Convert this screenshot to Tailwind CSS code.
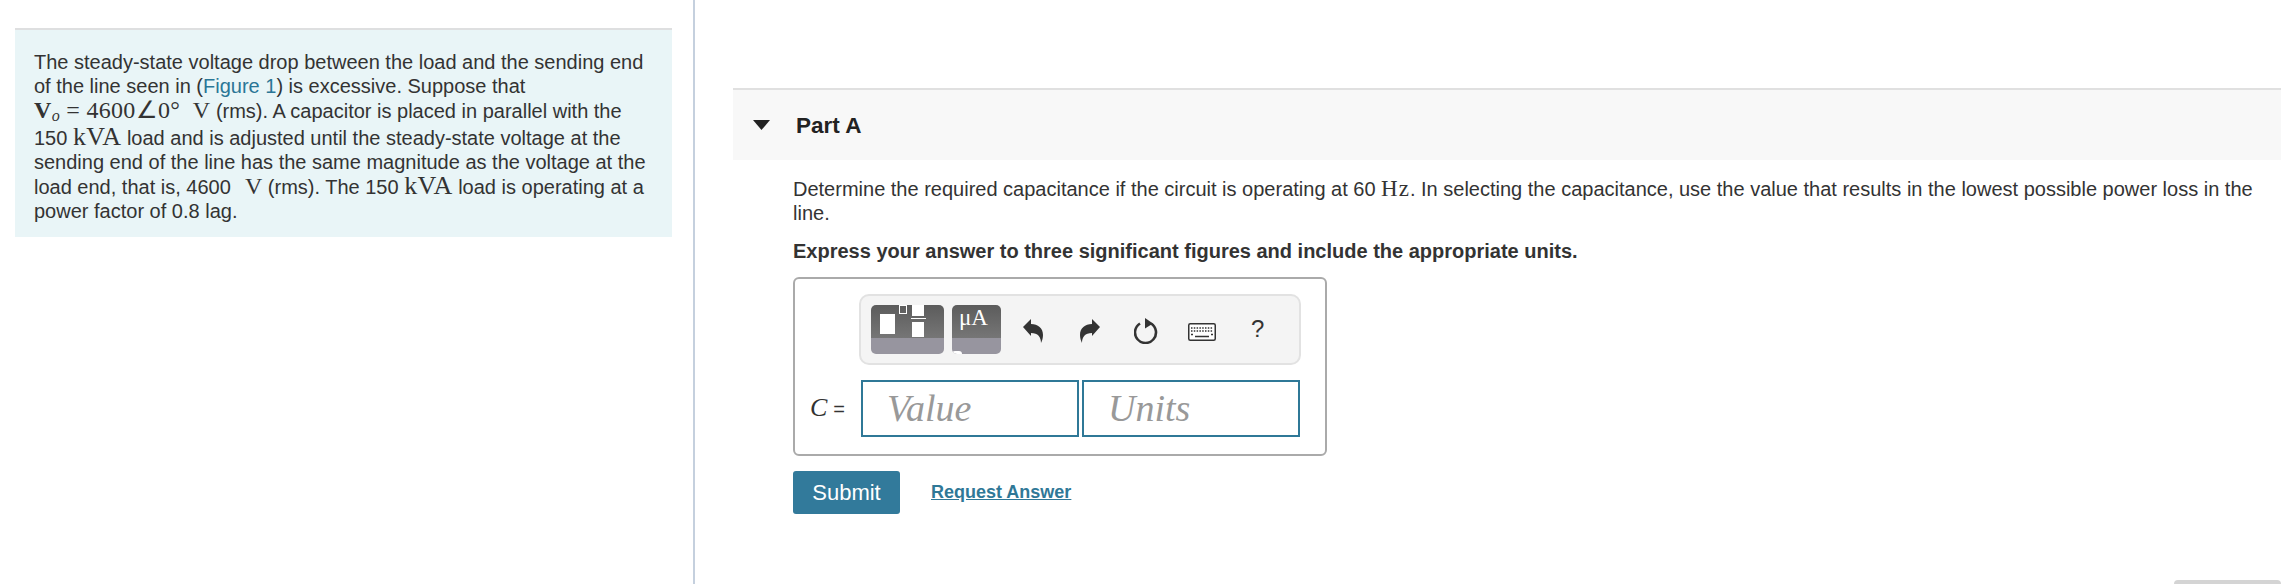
<!DOCTYPE html>
<html lang="en">
<head>
  <meta charset="UTF-8" />
  <title>Part A</title>
  <script src="https://cdn.jsdelivr.net/npm/@tailwindcss/browser@4"></script>
</head>
<body class="bg-white overflow-hidden">
  <div class="relative flex h-[584px] w-[2296px] font-['Liberation_Sans',Arial,sans-serif] text-[#333] text-[20px] leading-[24px]">

    <!-- Left column -->
    <aside class="w-[695px] h-full border-r-2 border-[#c5d0de] pl-[15px] pr-[21px] pt-[28px] shrink-0">
      <div class="h-[209px] bg-[#e9f5f7] border-t-2 border-[#dedfe0] pl-[19px] pr-[20px] pt-[20px]">
        <p>
          The steady-state voltage drop between the load and the sending end of the line seen in (<a class="text-[#2a7696]">Figure 1</a>) is excessive. Suppose that<br />
          <span class="font-['Liberation_Serif',serif] text-[24px] tracking-[0.3px] whitespace-nowrap"><b>V</b><i class="text-[16px] relative top-[3px]">o</i> = 4600∠0° &nbsp;V</span> (rms). A capacitor is placed in parallel with the<br />
          150 <span class="font-['Liberation_Serif',serif] text-[26px] tracking-[0.4px]">kVA</span> load and is adjusted until the steady-state voltage at the<br />
          sending end of the line has the same magnitude as the voltage at the<br />
          load end, that is, 4600 &nbsp;<span class="font-['Liberation_Serif',serif] text-[24px] ml-[3px]">V</span> (rms). The 150 <span class="font-['Liberation_Serif',serif] text-[26px] tracking-[0.4px]">kVA</span> load is operating at a<br />
          power factor of 0.8 lag.
        </p>
      </div>
    </aside>

    <!-- Right column -->
    <main class="flex-1 pl-[38px] pr-[15px] pt-[88px]">
      <div class="flex items-center h-[72px] bg-[#f8f8f8] border-t-2 border-[#e0e0e0]">
        <svg class="ml-[20px] w-[17px] h-[10px]" viewBox="0 0 17 10"><path d="M0 0h17L8.5 10z" fill="#222" /></svg>
        <h2 class="ml-[26px] mt-[1px] text-[22.5px] font-bold text-[#222]">Part A</h2>
      </div>

      <div class="pl-[60px] pt-[17px]">
        <p>Determine the required capacitance if the circuit is operating at 60 <span class="font-['Liberation_Serif',serif] text-[23px] tracking-[1px]">Hz</span>. In selecting the capacitance, use the value that results in the lowest possible power loss in the line.</p>
        <p class="mt-[14px] font-bold">Express your answer to three significant figures and include the appropriate units.</p>

        <!-- Answer box -->
        <div class="mt-[14px] w-[534px] h-[179px] border-2 border-[#aaa] rounded-[6px] pl-[15px] pt-[15px]">
          <div class="ml-[49px] flex items-center w-[442px] h-[71px] bg-[#f4f4f4] border-2 border-[#e2e2e2] rounded-[10px] pl-[10px]">
            <!-- template button -->
            <div class="relative w-[73px] h-[49px] rounded-[5px] overflow-hidden flex flex-col">
              <div class="h-[33px] bg-linear-to-b from-[#5c5c5c] to-[#767676]"></div>
              <div class="flex-1 bg-[#97959f]"></div>
              <div class="absolute left-[9px] top-[9px] w-[15px] h-[20px] bg-white"></div>
              <div class="absolute left-[28px] top-0 w-[8px] h-[9px] border border-white"></div>
              <div class="absolute left-[41px] top-0 w-[12px] h-[11px] bg-white"></div>
              <div class="absolute left-[40px] top-[13px] w-[15px] h-[1px] bg-white"></div>
              <div class="absolute left-[41px] top-[17px] w-[12px] h-[15px] bg-white"></div>
            </div>
            <!-- units button -->
            <div class="relative ml-[8px] w-[49px] h-[49px] rounded-[5px] overflow-hidden flex flex-col">
              <div class="h-[33px] bg-linear-to-b from-[#5c5c5c] to-[#767676]"></div>
              <div class="flex-1 bg-[#97959f]"></div>
              <span class="absolute left-[7px] top-[1px] font-['Liberation_Serif',serif] text-[23px] leading-[24px] text-white">μA</span>
              <div class="absolute left-0 bottom-0 w-[10px] h-[3px] rounded-t-full bg-white"></div>
            </div>
            <!-- undo -->
            <svg class="ml-[22px] mt-[2px] w-[20px] h-[24px]" viewBox="0 0 20 24"><path d="M0 8 8 0v5c7 0 12 4 12 11 0 3-1 6-2 8 0-6-3-10-10-10v3z" fill="#333" /></svg>
            <!-- redo -->
            <svg class="ml-[37px] mt-[2px] w-[20px] h-[24px]" viewBox="0 0 20 24"><path d="M20 8 12 0v5C5 5 0 9 0 16c0 3 1 6 2 8 0-6 3-10 10-10v3z" fill="#333" /></svg>
            <!-- reset -->
            <svg class="ml-[34px] mt-[2px] w-[24px] h-[26px]" viewBox="0 0 24 26" fill="none"><path d="M17 5.5A10.5 10.5 0 1 1 6 5.5" stroke="#333" stroke-width="2.6" /><path d="M11 0l8 5.5-8 5z" fill="#333" /></svg>
            <!-- keyboard -->
            <svg class="ml-[30px] mt-[4px] w-[28px] h-[18px]" viewBox="0 0 28 18" fill="none">
              <rect x="0.75" y="0.75" width="26.5" height="16.5" rx="1.5" fill="#fff" stroke="#333" stroke-width="1.5" />
              <path d="M3 5h22M3 8h22" stroke="#333" stroke-width="1.5" stroke-dasharray="1.5 1.3" />
              <path d="M3 11.5h2M23 11.5h2M7 13.5h14" stroke="#333" stroke-width="1.5" />
            </svg>
            <span class="ml-[35px] text-[24px] leading-none text-[#333] -mt-[2px]">?</span>
          </div>

          <div class="flex items-center mt-[15px]">
            <span class="w-[51px] shrink-0 text-[20px] whitespace-nowrap"><i class="font-['Liberation_Serif',serif] text-[26px] mr-[6px]">C</i>=</span>
            <input class="w-[218px] h-[57px] border-2 border-[#2f7897] pl-[24px] pb-[2px] font-['Liberation_Serif',serif] italic text-[38px] outline-none placeholder:text-[#999]" placeholder="Value" />
            <input class="ml-[3px] w-[218px] h-[57px] border-2 border-[#2f7897] pl-[24px] pb-[2px] font-['Liberation_Serif',serif] italic text-[38px] outline-none placeholder:text-[#999]" placeholder="Units" />
          </div>
        </div>

        <div class="flex items-center mt-[15px]">
          <button class="w-[107px] h-[43px] rounded-[3px] bg-[#327a9b] text-white text-[22px]">Submit</button>
          <a class="ml-[31px] -mt-[1px] font-bold text-[18px] text-[#2f7897] underline">Request Answer</a>
        </div>
      </div>
    </main>

    <!-- tab cut off by the bottom edge -->
    <div class="absolute right-[15px] bottom-0 w-[107px] h-[4px] rounded-t-[4px] bg-[#d4d4d4]"></div>
  </div>
</body>
</html>
